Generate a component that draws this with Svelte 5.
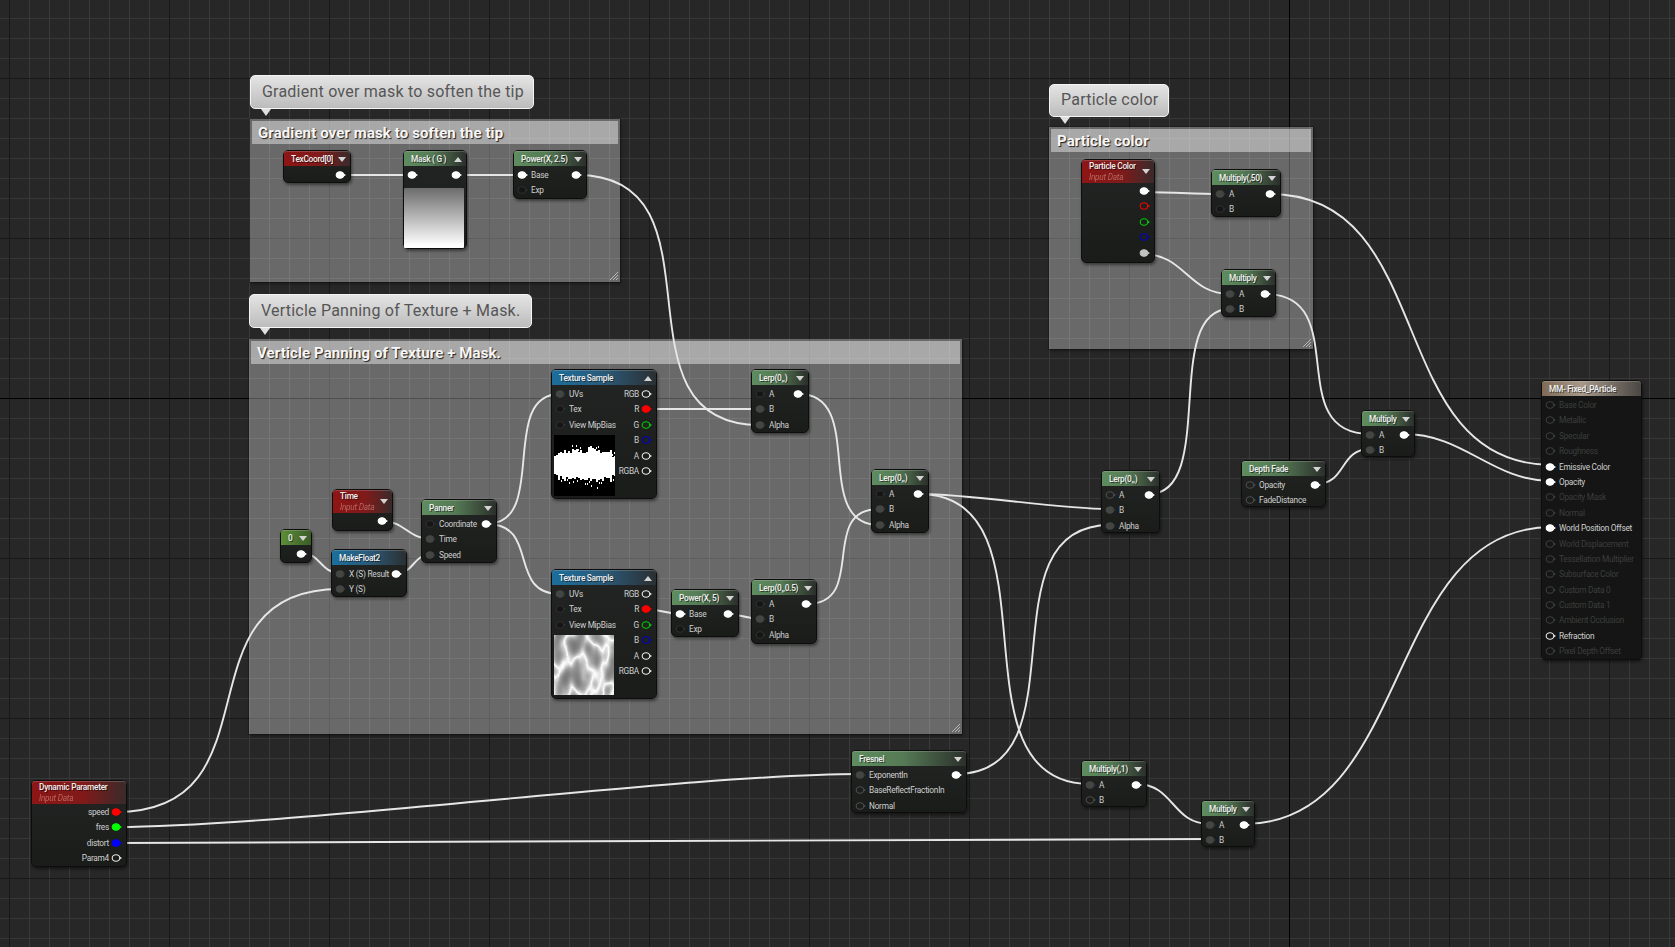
<script>
  const comments = [
    { x: 250, y: 119, w: 370, h: 163, title: 'Gradient over mask to soften the tip', bw: 284, bt: 75, bh: 34 },
    { x: 249, y: 339, w: 713, h: 395, title: 'Verticle Panning of Texture + Mask.', bw: 283, bt: 294, bh: 34 },
    { x: 1049, y: 127, w: 264, h: 222, title: 'Particle color', bw: 120, bt: 84, bh: 33 }
  ];

  const p = (label, type) => ({ label, type });

  const rgbaOuts = (rType) => [
    p('RGB', 'hollowW'), p('R', rType), p('G', 'greenO'), p('B', 'blueO'), p('A', 'hollowW'), p('RGBA', 'hollowW')
  ];

  const nodes = [
    { x: 283, y: 150, w: 68, h: 33, t: 'TexCoord[0]', c: 'h-red', outs: [p('', 'white')] },
    { x: 403, y: 150, w: 64, h: 99, t: 'Mask ( G )', c: 'h-green', up: true, ins: [p('', 'white')], outs: [p('', 'white')], preview: 'grad' },
    { x: 513, y: 150, w: 74, h: 49, t: 'Power(X, 2.5)', c: 'h-green', ins: [p('Base', 'white'), p('Exp', 'off')], outs: [p('', 'white')] },

    { x: 551, y: 369, w: 106, h: 130, t: 'Texture Sample', c: 'h-blue', up: true, ins: [p('UVs', 'gray'), p('Tex', 'off'), p('View MipBias', 'off')], outs: rgbaOuts('redF'), preview: 'mask' },
    { x: 551, y: 569, w: 106, h: 130, t: 'Texture Sample', c: 'h-blue', up: true, ins: [p('UVs', 'gray'), p('Tex', 'off'), p('View MipBias', 'off')], outs: rgbaOuts('redF'), preview: 'water' },
    { x: 332, y: 489, w: 61, h: 42, t: 'Time', sub: 'Input Data', c: 'h-red', outs: [p('', 'white')] },
    { x: 421, y: 499, w: 76, h: 64, t: 'Panner', c: 'h-green', ins: [p('Coordinate', 'off'), p('Time', 'gray'), p('Speed', 'gray')], outs: [p('', 'white')] },
    { x: 280, y: 529, w: 32, h: 34, t: '0', c: 'h-lime', outs: [p('', 'white')] },
    { x: 331, y: 549, w: 76, h: 48, t: 'MakeFloat2', c: 'h-blue', noArrow: true, ins: [p('X (S)', 'gray'), p('Y (S)', 'gray')], outs: [p('Result', 'white')] },
    { x: 751, y: 369, w: 58, h: 64, t: 'Lerp(0,,)', c: 'h-green', ins: [p('A', 'off'), p('B', 'gray'), p('Alpha', 'gray')], outs: [p('', 'white')] },
    { x: 871, y: 469, w: 58, h: 64, t: 'Lerp(0,,)', c: 'h-green', ins: [p('A', 'off'), p('B', 'gray'), p('Alpha', 'gray')], outs: [p('', 'white')] },
    { x: 671, y: 589, w: 68, h: 48, t: 'Power(X, 5)', c: 'h-green', ins: [p('Base', 'white'), p('Exp', 'off')], outs: [p('', 'white')] },
    { x: 751, y: 579, w: 66, h: 65, t: 'Lerp(0,,0.5)', c: 'h-green', ins: [p('A', 'off'), p('B', 'gray'), p('Alpha', 'off')], outs: [p('', 'white')] },

    { x: 1081, y: 159, w: 74, h: 104, t: 'Particle Color', sub: 'Input Data', c: 'h-red', outs: [p('', 'white'), p('', 'redO'), p('', 'greenO'), p('', 'blueO'), p('', 'light')] },
    { x: 1211, y: 169, w: 70, h: 48, t: 'Multiply(,50)', c: 'h-green', ins: [p('A', 'gray'), p('B', 'off')], outs: [p('', 'white')] },
    { x: 1221, y: 269, w: 55, h: 48, t: 'Multiply', c: 'h-green', ins: [p('A', 'gray'), p('B', 'gray')], outs: [p('', 'white')] },

    { x: 1101, y: 470, w: 59, h: 63, t: 'Lerp(0,,)', c: 'h-green', ins: [p('A', 'hollow'), p('B', 'gray'), p('Alpha', 'gray')], outs: [p('', 'white')] },
    { x: 1241, y: 460, w: 85, h: 47, t: 'Depth Fade', c: 'h-green', ins: [p('Opacity', 'hollow'), p('FadeDistance', 'hollow')], outs: [p('', 'white')] },
    { x: 1361, y: 410, w: 54, h: 47, t: 'Multiply', c: 'h-green', ins: [p('A', 'gray'), p('B', 'gray')], outs: [p('', 'white')] },

    { x: 851, y: 750, w: 116, h: 63, t: 'Fresnel', c: 'h-green', ins: [p('ExponentIn', 'gray'), p('BaseReflectFractionIn', 'hollow'), p('Normal', 'hollow')], outs: [p('', 'white')] },
    { x: 1081, y: 760, w: 66, h: 47, t: 'Multiply(,1)', c: 'h-green', ins: [p('A', 'gray'), p('B', 'hollow')], outs: [p('', 'white')] },
    { x: 1201, y: 800, w: 54, h: 47, t: 'Multiply', c: 'h-green', ins: [p('A', 'gray'), p('B', 'gray')], outs: [p('', 'white')] },

    { x: 31, y: 780, w: 96, h: 87, t: 'Dynamic Parameter', sub: 'Input Data', c: 'h-red', noArrow: true, outs: [p('speed', 'redF'), p('fres', 'greenF'), p('distort', 'blueF'), p('Param4', 'hollowW')] },

    { x: 1541, y: 380, w: 101, h: 280, t: 'MM- Fixed_PArticle', c: 'h-brown', noArrow: true, result: true, ins: [
      p('Base Color', 'dim'), p('Metallic', 'dim'), p('Specular', 'dim'), p('Roughness', 'dim'),
      p('Emissive Color', 'white'), p('Opacity', 'white'), p('Opacity Mask', 'dim'), p('Normal', 'dim'),
      p('World Position Offset', 'white'), p('World Displacement', 'dim'), p('Tessellation Multiplier', 'dim'),
      p('Subsurface Color', 'dim'), p('Custom Data 0', 'dim'), p('Custom Data 1', 'dim'),
      p('Ambient Occlusion', 'dim'), p('Refraction', 'hollowW'), p('Pixel Depth Offset', 'dim')
    ] }
  ];

  const links = [
    [340, 175, 411, 175], [457, 175, 521, 175], [577, 175, 760, 425], [646, 409, 760, 409],
    [799, 394, 879, 525], [807, 604, 879, 509], [383, 521, 430, 539], [301, 553, 340, 573],
    [397, 573, 430, 555], [487, 524, 560, 394], [487, 524, 560, 594], [646, 609, 680, 614],
    [728, 614, 760, 619], [116, 812, 340, 589], [116, 827, 860, 774], [116, 843, 1210, 839],
    [956, 774, 1110, 525], [919, 494, 1110, 509], [919, 494, 1090, 784], [1149, 494, 1230, 309],
    [1143, 192, 1220, 194], [1143, 254, 1230, 294], [1270, 194, 1552, 465], [1265, 294, 1370, 434],
    [1316, 484, 1370, 449], [1404, 434, 1552, 481], [1136, 784, 1210, 824], [1244, 824, 1552, 527]
  ];

  const wire = ([a, b, c, d]) => {
    const dx = c - a;
    const k = Math.min(dx * 0.85, 170, 0.25 * dx + 0.5 * Math.abs(d - b));
    return `M${a} ${b}C${a + k} ${b} ${c - k} ${d} ${c} ${d}`;
  };

  // Pixel-noise silhouette for the mask thumbnail
  let seed = 23;
  const rnd = () => ((seed = (seed * 16807) % 2147483647) / 2147483647);
  const maskRects = [];
  for (let x = 0; x < 61; x += 2) {
    const e = Math.min(x, 60 - x) < 3 ? 4 : 0;
    const top = 17 + e - Math.floor(rnd() * rnd() * 7) + Math.floor(rnd() * 2);
    const bot = 41 - e + Math.floor(rnd() * 4) + Math.floor(rnd() * rnd() * 6);
    maskRects.push({ x, y: top, w: 2, h: bot - top });
    if (rnd() > 0.55) maskRects.push({ x: x + 1, y: bot + 2 + Math.floor(rnd() * 4), w: 1, h: 2 });
    if (rnd() > 0.7) maskRects.push({ x, y: top - 3 - Math.floor(rnd() * 2), w: 1, h: 2 });
  }
  const ridge = '.46 .46 .46 .48 .52 .58 .66 .8 1 .8 .66 .58 .52 .48 .46 .46 .46';
</script>

<main class="canvas">
  {#each comments as c}
    <div class="comment" style="left:{c.x}px;top:{c.y}px;width:{c.w}px;height:{c.h}px">
      <div class="ctitle">{c.title}</div>
      <svg class="grip" width="10" height="10" viewBox="0 0 10 10" aria-hidden="true">
        <path d="M1 9L9 1M4 9L9 4M7 9L9 7" stroke="#b8b8b8" stroke-width="1" fill="none" />
      </svg>
    </div>
    <div class="bubble" style="left:{c.x}px;top:{c.bt}px;width:{c.bw}px;height:{c.bh}px">
      {c.title}
      <span class="tail"></span>
    </div>
  {/each}

  <svg class="wires" width="1675" height="947" aria-hidden="true">
    <defs>
      <filter id="caustic" x="0" y="0" width="100%" height="100%" color-interpolation-filters="sRGB">
        <feTurbulence type="fractalNoise" baseFrequency="0.06 0.035" numOctaves="2" seed="11" />
        <feColorMatrix values="1 0 0 0 0 1 0 0 0 0 1 0 0 0 0 0 0 0 0 1" />
        <feComponentTransfer>
          <feFuncR type="table" tableValues={ridge} />
          <feFuncG type="table" tableValues={ridge} />
          <feFuncB type="table" tableValues={ridge} />
        </feComponentTransfer>
        <feGaussianBlur stdDeviation="0.5" />
      </filter>
    </defs>
    {#each links as l}
      <path d={wire(l)} />
    {/each}
  </svg>

  {#snippet pin(type)}
    <svg class="pin {type}" width="12" height="10" viewBox="0 0 12 10" aria-hidden="true">
      <ellipse cx="5" cy="5" rx="3.8" ry="3.3" />
      <path class="tip" d="M8.6 3.6L11 5L8.6 6.4Z" />
    </svg>
  {/snippet}

  {#each nodes as n}
    <article class="node {n.result ? 'result' : ''}" style="left:{n.x}px;top:{n.y}px;width:{n.w}px;height:{n.h}px">
      <header class="head {n.c} {n.sub ? 'tall' : ''}">
        <div class="titles">
          <div class="title">{n.t}</div>
          {#if n.sub}<div class="sub">{n.sub}</div>{/if}
        </div>
        {#if !n.noArrow}<span class="arrow {n.up ? 'up' : ''}"></span>{/if}
      </header>
      <div class="body {n.sub ? 'tight' : ''}">
        <div class="col">
          {#each n.ins ?? [] as i}
            <div class="row {i.type === 'dim' ? 'faded' : ''}">
              {@render pin(i.type)}
              <span>{i.label}</span>
            </div>
          {/each}
          {#if n.preview === 'mask'}
            <svg class="thumb" width="61" height="61" viewBox="0 0 61 61" aria-hidden="true">
              <rect width="61" height="61" fill="#000" />
              {#each maskRects as r}<rect x={r.x} y={r.y} width={r.w} height={r.h} fill="#fff" />{/each}
            </svg>
          {:else if n.preview === 'water'}
            <svg class="thumb" width="60" height="60" viewBox="0 0 60 60" aria-hidden="true">
              <rect width="60" height="60" filter="url(#caustic)" />
            </svg>
          {/if}
        </div>
        <div class="col right">
          {#each n.outs ?? [] as o}
            <div class="row">
              <span>{o.label}</span>
              {@render pin(o.type)}
            </div>
          {/each}
        </div>
        {#if n.preview === 'grad'}<div class="grad"></div>{/if}
      </div>
    </article>
  {/each}
</main>

<style>
  :global(body) {
    margin: 0;
    background: #272727;
    overflow: hidden;
  }
  .canvas {
    position: relative;
    width: 1675px;
    height: 947px;
    overflow: hidden;
    font-family: Roboto, "Liberation Sans", sans-serif;
    background-color: #272727;
    background-image:
      repeating-linear-gradient(to bottom, transparent 0 18px, #373737 18px 19px, transparent 19px 20px),
      repeating-linear-gradient(to right, transparent 0 9px, #3a3a3a 9px 10px, transparent 10px 20px);
  }
  .canvas::before {
    content: "";
    position: absolute;
    inset: 0;
    background-image:
      linear-gradient(#000, #000),
      linear-gradient(#000, #000),
      repeating-linear-gradient(to bottom, transparent 0 78px, #181818 78px 79px, transparent 79px 160px),
      repeating-linear-gradient(to right, transparent 0 9px, #181818 9px 10px, transparent 10px 160px);
    background-size: 100% 1px, 1px 100%, auto, auto;
    background-position: 0 398px, 1289px 0, 0 0, 0 0;
    background-repeat: no-repeat;
  }
  .comment {
    position: absolute;
    box-sizing: border-box;
    background: rgba(255, 255, 255, 0.31);
    box-shadow: 0 0 0 1px rgba(0, 0, 0, 0.2), 1px 2px 3px rgba(0, 0, 0, 0.35);
    padding: 2px 2px 0;
  }
  .ctitle {
    height: 23px;
    line-height: 25px;
    background: rgba(255, 255, 255, 0.42);
    color: #f6f6f6;
    font-size: 15px;
    font-weight: 700;
    letter-spacing: 0.1px;
    padding-left: 6px;
    text-shadow: 1px 1px 1px rgba(0, 0, 0, 0.85);
    white-space: nowrap;
  }
  .grip {
    position: absolute;
    right: 1px;
    bottom: 1px;
  }
  .bubble {
    position: absolute;
    box-sizing: border-box;
    background: linear-gradient(#e4e4e4, #bcbcbc);
    border: 1px solid #f4f4f4;
    border-radius: 5px;
    color: #565656;
    font-size: 16px;
    letter-spacing: 0.22px;
    display: flex;
    align-items: center;
    padding: 0 0 2px 11px;
    white-space: nowrap;
  }
  .tail {
    position: absolute;
    left: 10px;
    bottom: -8px;
    border-left: 5px solid transparent;
    border-right: 5px solid transparent;
    border-top: 7px solid #e0e0e0;
  }
  .wires {
    position: absolute;
    left: 0;
    top: 0;
  }
  .wires path {
    fill: none;
    stroke: #e6e6e6;
    stroke-width: 1.9;
  }
  .node {
    position: absolute;
    box-sizing: border-box;
    background: linear-gradient(#222523, #1a1c1a);
    border: 1px solid #0d0d0d;
    border-radius: 5px;
    box-shadow: 1px 2px 3px rgba(0, 0, 0, 0.45);
    color: #cfcfcf;
    font-size: 8.3px;
    letter-spacing: -0.27px;
    display: flex;
    flex-direction: column;
  }
  .node.result {
    background: #141514;
  }
  .head {
    flex: none;
    box-sizing: border-box;
    height: 15px;
    border-radius: 3px 3px 0 0;
    display: flex;
    align-items: center;
    justify-content: space-between;
    padding: 1px 4px 0 7px;
    box-shadow: inset 0 1px 0 rgba(255, 255, 255, 0.18);
  }
  .head.tall {
    height: 23px;
    padding-top: 0;
  }
  .h-green { background: linear-gradient(to right, #5f8d5f 0%, #557a55 45%, #2b2f2b 100%); }
  .h-lime { background: linear-gradient(to right, #5c8f38, #3b5c28); }
  .h-red { background: linear-gradient(to right, #8e1515 0%, #801a1a 55%, #3a2a2a 100%); }
  .h-blue { background: linear-gradient(to right, #1c6e9c 0%, #2b5a78 50%, #2b2f32 100%); }
  .h-brown { background: linear-gradient(to right, #7f6a56, #a6998a 40%, #4a4744 100%); }
  .titles {
    min-width: 0;
    white-space: nowrap;
  }
  .title {
    color: #f0f0f0;
    font-weight: 500;
    line-height: 11px;
    text-shadow: 1px 1px 0 rgba(0, 0, 0, 0.55);
  }
  .sub {
    color: #c27a70;
    font-style: italic;
    line-height: 10px;
    opacity: 0.8;
  }
  .arrow {
    flex: none;
    width: 0;
    height: 0;
    border-left: 4px solid transparent;
    border-right: 4px solid transparent;
    border-top: 5px solid #d4d4d4;
  }
  .arrow.up {
    border-top: 0;
    border-bottom: 5px solid #d4d4d4;
  }
  .body {
    flex: 1;
    display: grid;
    grid-template-columns: 1fr auto;
    align-content: start;
    padding: 1.3px 3px 0 3px;
    min-height: 0;
  }
  .body.tight {
    padding-top: 0.3px;
  }
  .col {
    display: flex;
    flex-direction: column;
    align-items: flex-start;
    min-width: 0;
  }
  .col.right {
    align-items: flex-end;
  }
  .row {
    height: 15.4px;
    display: flex;
    align-items: center;
    gap: 2px;
    white-space: nowrap;
  }
  .row.faded {
    color: #3c3e3c;
  }
  .thumb {
    display: block;
    margin: 3px 0 0 -1px;
  }
  .grad {
    grid-column: 1 / -1;
    height: 60px;
    margin: 5px -1px 0 -3px;
    background: linear-gradient(#6c6c6c, #ffffff 96%);
    border-radius: 1px;
  }
  .pin {
    flex: none;
  }
  .pin ellipse { fill: none; stroke: #333; stroke-width: 1.1; }
  .pin .tip { fill: none; }
  .pin.off ellipse { fill: #141514; stroke: #2f2f2f; }
  .pin.off .tip { fill: #2f2f2f; }
  .pin.hollow ellipse { stroke: #4c4c4c; }
  .pin.hollow .tip { fill: #4c4c4c; }
  .pin.dim ellipse { stroke: #3c3e3c; }
  .pin.dim .tip { fill: #3c3e3c; }
  .pin.gray ellipse { fill: #444644; stroke: #444644; }
  .pin.gray .tip { fill: #333; }
  .pin.white ellipse { fill: #fff; stroke: #fff; }
  .pin.white .tip { fill: #fff; }
  .pin.light ellipse { fill: #c2c2c2; stroke: #c2c2c2; }
  .pin.light .tip { fill: #c2c2c2; }
  .pin.hollowW ellipse { stroke: #e8e8e8; }
  .pin.hollowW .tip { fill: #e8e8e8; }
  .pin.redF ellipse { fill: #f00; stroke: #f00; }
  .pin.redF .tip { fill: #f00; }
  .pin.redO ellipse { stroke: #f00; }
  .pin.redO .tip { fill: #f00; }
  .pin.greenO ellipse { stroke: #0c0; }
  .pin.greenO .tip { fill: #0c0; }
  .pin.greenF ellipse { fill: #0f0; stroke: #0f0; }
  .pin.greenF .tip { fill: #0f0; }
  .pin.blueO ellipse { stroke: #00c; }
  .pin.blueO .tip { fill: #00c; }
  .pin.blueF ellipse { fill: #00f; stroke: #00f; }
  .pin.blueF .tip { fill: #00f; }
</style>
